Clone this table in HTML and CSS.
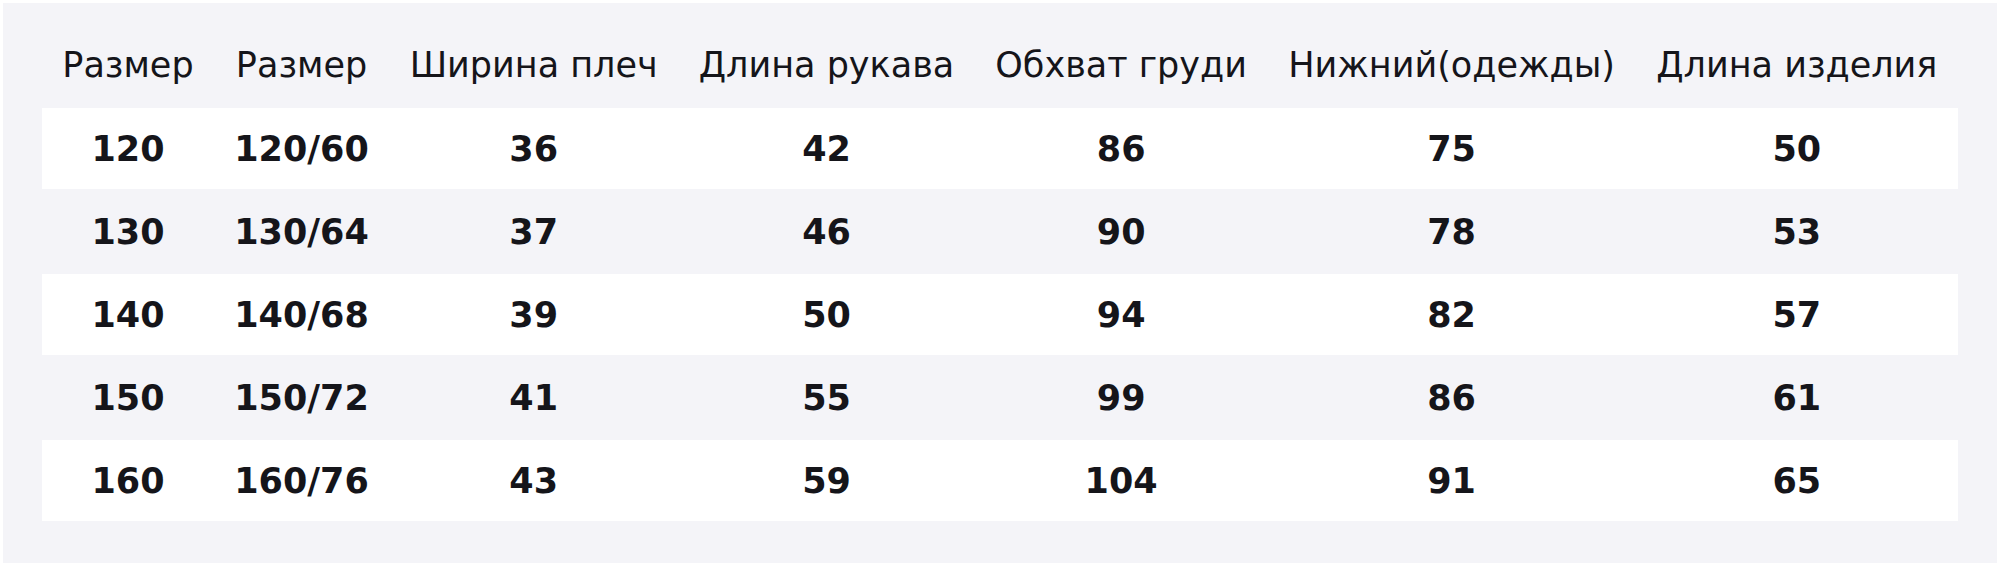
FILE: index.html
```html
<!DOCTYPE html>
<html lang="ru">
<head>
<meta charset="utf-8">
<title>Таблица размеров</title>
<link rel="stylesheet" href="styles.css">
</head>
<body>
<div class="sheet">
  <table class="sizes">
    <thead>
      <tr>
        <th>Размер</th>
        <th>Размер</th>
        <th>Ширина плеч</th>
        <th>Длина рукава</th>
        <th>Обхват груди</th>
        <th>Нижний(одежды)</th>
        <th>Длина изделия</th>
      </tr>
    </thead>
    <tbody>
      <tr class="light"><td>120</td><td>120/60</td><td>36</td><td>42</td><td>86</td><td>75</td><td>50</td></tr>
      <tr><td>130</td><td>130/64</td><td>37</td><td>46</td><td>90</td><td>78</td><td>53</td></tr>
      <tr class="light"><td>140</td><td>140/68</td><td>39</td><td>50</td><td>94</td><td>82</td><td>57</td></tr>
      <tr><td>150</td><td>150/72</td><td>41</td><td>55</td><td>99</td><td>86</td><td>61</td></tr>
      <tr class="light"><td>160</td><td>160/76</td><td>43</td><td>59</td><td>104</td><td>91</td><td>65</td></tr>
    </tbody>
  </table>
</div>
</body>
</html>
```

FILE: styles.css
```css
html, body {
  margin: 0;
  padding: 0;
  background: #ffffff;
}

body {
  padding: 3px;
  font-family: "DejaVu Sans", "Noto Sans", sans-serif;
  color: #15151a;
}

.sheet {
  box-sizing: border-box;
  width: 1994px;
  height: 560px;
  background: #f4f4f8;
  padding: 20px 39px 39px 39px;
}

.sizes {
  width: 100%;
  border-collapse: separate;
  border-spacing: 0 2px;
}

.sizes th,
.sizes td {
  font-size: 35px;
  line-height: 41px;
  height: 81px;
  box-sizing: border-box;
  padding: 0 20px;
  text-align: center;
  white-space: nowrap;
  vertical-align: middle;
}

.sizes th {
  font-weight: normal;
}

.sizes td {
  font-weight: bold;
  padding-top: 2px;
}

.sizes tr.light td {
  background: #ffffff;
}
```
